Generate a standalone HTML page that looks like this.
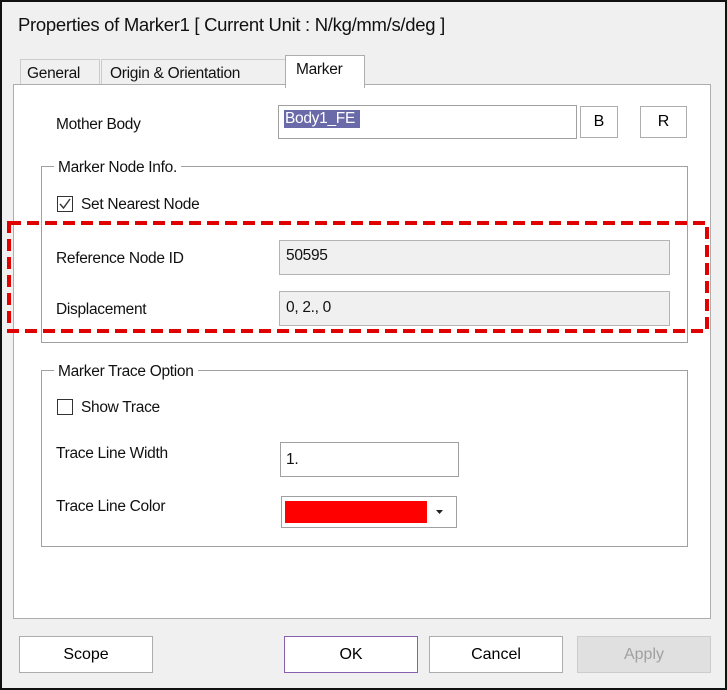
<!DOCTYPE html>
<html><head><style>
body{margin:0;width:727px;height:690px;overflow:hidden;font-family:"Liberation Sans",sans-serif;}
.win{position:absolute;left:0;top:0;width:723px;height:686px;border:2px solid #111;background:#f0f0f0;}
.a{position:absolute;}
.t{position:absolute;font-size:15.5px;color:#111;white-space:nowrap;letter-spacing:-0.3px}
.box{position:absolute;border:1px solid #a0a0a0;}
.btn{position:absolute;border:1px solid #adadad;background:#fff;font-size:16px;text-align:center;box-sizing:border-box;}
.cb{position:absolute;width:16px;height:16px;border:1px solid #333;background:#fff;box-sizing:border-box;}
</style></head><body>
<div class="win">
<div class="t" style="left:16px;top:12px;font-size:18.5px;">Properties of Marker1 [ Current Unit : N/kg/mm/s/deg ]</div>
<!-- tabs -->
<div class="a" style="left:18px;top:57px;width:78px;height:26px;border:1px solid #ccc;border-bottom:none;background:#f0f0f0"></div>
<div class="t" style="left:25px;top:63px;">General</div>
<div class="a" style="left:99px;top:57px;width:184px;height:26px;border:1px solid #ccc;border-bottom:none;background:#f0f0f0"></div>
<div class="t" style="left:108px;top:63px;">Origin &amp; Orientation</div>
<div class="a" style="left:11px;top:82px;width:696px;height:533px;border:1px solid #adadad;background:#fff"></div>
<div class="a" style="left:283px;top:53px;width:78px;height:32px;border:1px solid #adadad;border-bottom:none;background:#fff"></div>
<div class="t" style="left:294px;top:59px;">Marker</div>

<div class="t" style="left:54px;top:114px;">Mother Body</div>
<div class="box" style="left:276px;top:103px;width:297px;height:32px;background:#fff"></div>
<div class="a" style="left:282px;top:108px;width:76px;height:18px;background:#6a6aa8"></div>
<div class="t" style="left:283px;top:108px;color:#fff">Body1_FE</div>
<div class="btn" style="left:578px;top:104px;width:38px;height:32px;line-height:30px;">B</div>
<div class="btn" style="left:638px;top:104px;width:47px;height:32px;line-height:30px;">R</div>

<div class="box" style="left:39px;top:164px;width:645px;height:175px;"></div>
<div class="t" style="left:52px;top:157px;background:#fff;padding:0 4px">Marker Node Info.</div>
<div class="cb" style="left:55px;top:194px;"></div>
<svg class="a" style="left:55px;top:194px" width="16" height="16"><path d="M3 8 L6.5 12 L13 3" stroke="#333" stroke-width="1.4" fill="none"/></svg>
<div class="t" style="left:79px;top:194px;">Set Nearest Node</div>
<div class="t" style="left:54px;top:248px;">Reference Node ID</div>
<div class="box" style="left:277px;top:238px;width:389px;height:33px;background:#f0f0f0;border-color:#b4b4b4"></div>
<div class="t" style="left:284px;top:245px;">50595</div>
<div class="t" style="left:54px;top:299px;">Displacement</div>
<div class="box" style="left:277px;top:289px;width:389px;height:33px;background:#f0f0f0;border-color:#b4b4b4"></div>
<div class="t" style="left:284px;top:297px;">0, 2., 0</div>
<svg class="a" style="left:0;top:0" width="723" height="686"><rect x="7" y="221" width="698" height="108" fill="none" stroke="#e00000" stroke-width="4" stroke-dasharray="12 6"/></svg>

<div class="box" style="left:39px;top:368px;width:645px;height:175px;"></div>
<div class="t" style="left:52px;top:361px;background:#fff;padding:0 4px">Marker Trace Option</div>
<div class="cb" style="left:55px;top:397px;"></div>
<div class="t" style="left:79px;top:397px;">Show Trace</div>
<div class="t" style="left:54px;top:443px;">Trace Line Width</div>
<div class="box" style="left:278px;top:440px;width:177px;height:33px;background:#fff"></div>
<div class="t" style="left:284px;top:449px;">1.</div>
<div class="t" style="left:54px;top:496px;">Trace Line Color</div>
<div class="box" style="left:279px;top:494px;width:174px;height:30px;background:#fff"></div>
<div class="a" style="left:283px;top:499px;width:142px;height:22px;background:#f00"></div>
<svg class="a" style="left:433px;top:507px" width="10" height="6"><path d="M1 1 L8 1 L4.5 5Z" fill="#222"/></svg>

<div class="btn" style="left:17px;top:634px;width:134px;height:37px;line-height:35px;">Scope</div>
<div class="btn" style="left:282px;top:634px;width:134px;height:37px;line-height:35px;border-color:#8a5fb0">OK</div>
<div class="btn" style="left:427px;top:634px;width:134px;height:37px;line-height:35px;">Cancel</div>
<div class="btn" style="left:575px;top:634px;width:134px;height:37px;line-height:35px;background:#e0e0e0;border-color:#ccc;color:#a0a0a0">Apply</div>
</div>
</body></html>
